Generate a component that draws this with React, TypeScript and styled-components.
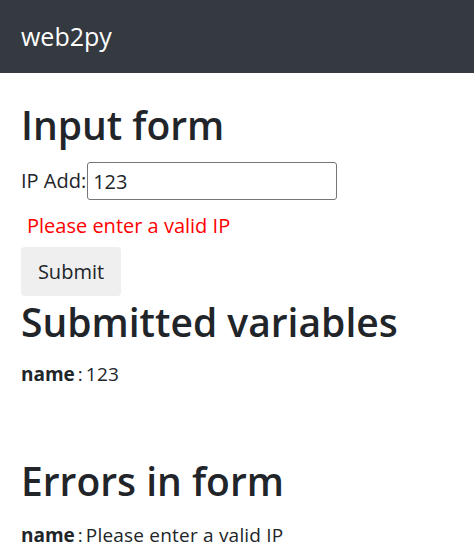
import React from "react";
import styled, { createGlobalStyle } from "styled-components";

const GlobalStyle = createGlobalStyle`
  html, body {
    margin: 0;
    padding: 0;
    background: #fff;
  }
  body {
    font-family: "Open Sans", "Noto Sans", sans-serif;
    color: #212529;
    font-size: 20px;
  }
`;

const Navbar = styled.nav`
  height: 73px;
  background-color: #343a40;
  display: flex;
  align-items: center;
  padding: 0 21px;
  box-sizing: border-box;
`;

const Brand = styled.span`
  color: #fff;
  font-size: 25px;
  line-height: 1;
  margin-top: -1px;
`;

const Main = styled.main`
  padding: 0 21px;
  display: flex;
  flex-direction: column;
  align-items: flex-start;
`;

const Heading = styled.h1<{ $top: number }>`
  font-size: 39px;
  font-weight: 600;
  line-height: 48px;
  margin: ${(p) => p.$top}px 0 0;
  color: #212529;
`;

const FieldRow = styled.div`
  display: flex;
  align-items: center;
  margin-top: 13px;
`;

const Label = styled.label`
  font-size: 20px;
  line-height: 1;
`;

const TextInput = styled.input`
  box-sizing: border-box;
  width: 250px;
  height: 38px;
  margin-left: 1px;
  border: 1px solid #767676;
  border-radius: 3px;
  padding: 0 5px;
  font-family: inherit;
  font-size: 20px;
  color: #212529;
  outline: none;
`;

const ErrorText = styled.div`
  color: #f00;
  font-size: 20px;
  line-height: 28px;
  margin: 12px 0 0 6px;
`;

const SubmitButton = styled.button`
  margin-top: 7px;
  width: 100px;
  height: 49px;
  border: none;
  border-radius: 4px;
  background: #efefef;
  font-family: inherit;
  font-size: 20px;
  color: #212529;
  padding: 0;
`;

const VarLine = styled.div<{ $top: number }>`
  margin-top: ${(p) => p.$top}px;
  font-size: 19px;
  line-height: 24px;
`;

const VarName = styled.b`
  font-weight: 700;
`;

const Colon = styled.span`
  margin: 0 3px 0 3px;
`;

const VarValue = styled.span`
  letter-spacing: 0.2px;
`;

export default function App() {
  return (
    <>
      <GlobalStyle />
      <Navbar>
        <Brand>web2py</Brand>
      </Navbar>
      <Main>
        <Heading $top={28}>Input form</Heading>
        <FieldRow>
          <Label htmlFor="ip">IP Add:</Label>
          <TextInput id="ip" defaultValue="123" />
        </FieldRow>
        <ErrorText>Please enter a valid IP</ErrorText>
        <SubmitButton>Submit</SubmitButton>
        <Heading $top={2}>Submitted variables</Heading>
        <VarLine $top={16}>
          <VarName>name</VarName>
          <Colon>:</Colon>
          <VarValue>123</VarValue>
        </VarLine>
        <Heading $top={71}>Errors in form</Heading>
        <VarLine $top={18}>
          <VarName>name</VarName>
          <Colon>:</Colon>
          <VarValue>Please enter a valid IP</VarValue>
        </VarLine>
      </Main>
    </>
  );
}
